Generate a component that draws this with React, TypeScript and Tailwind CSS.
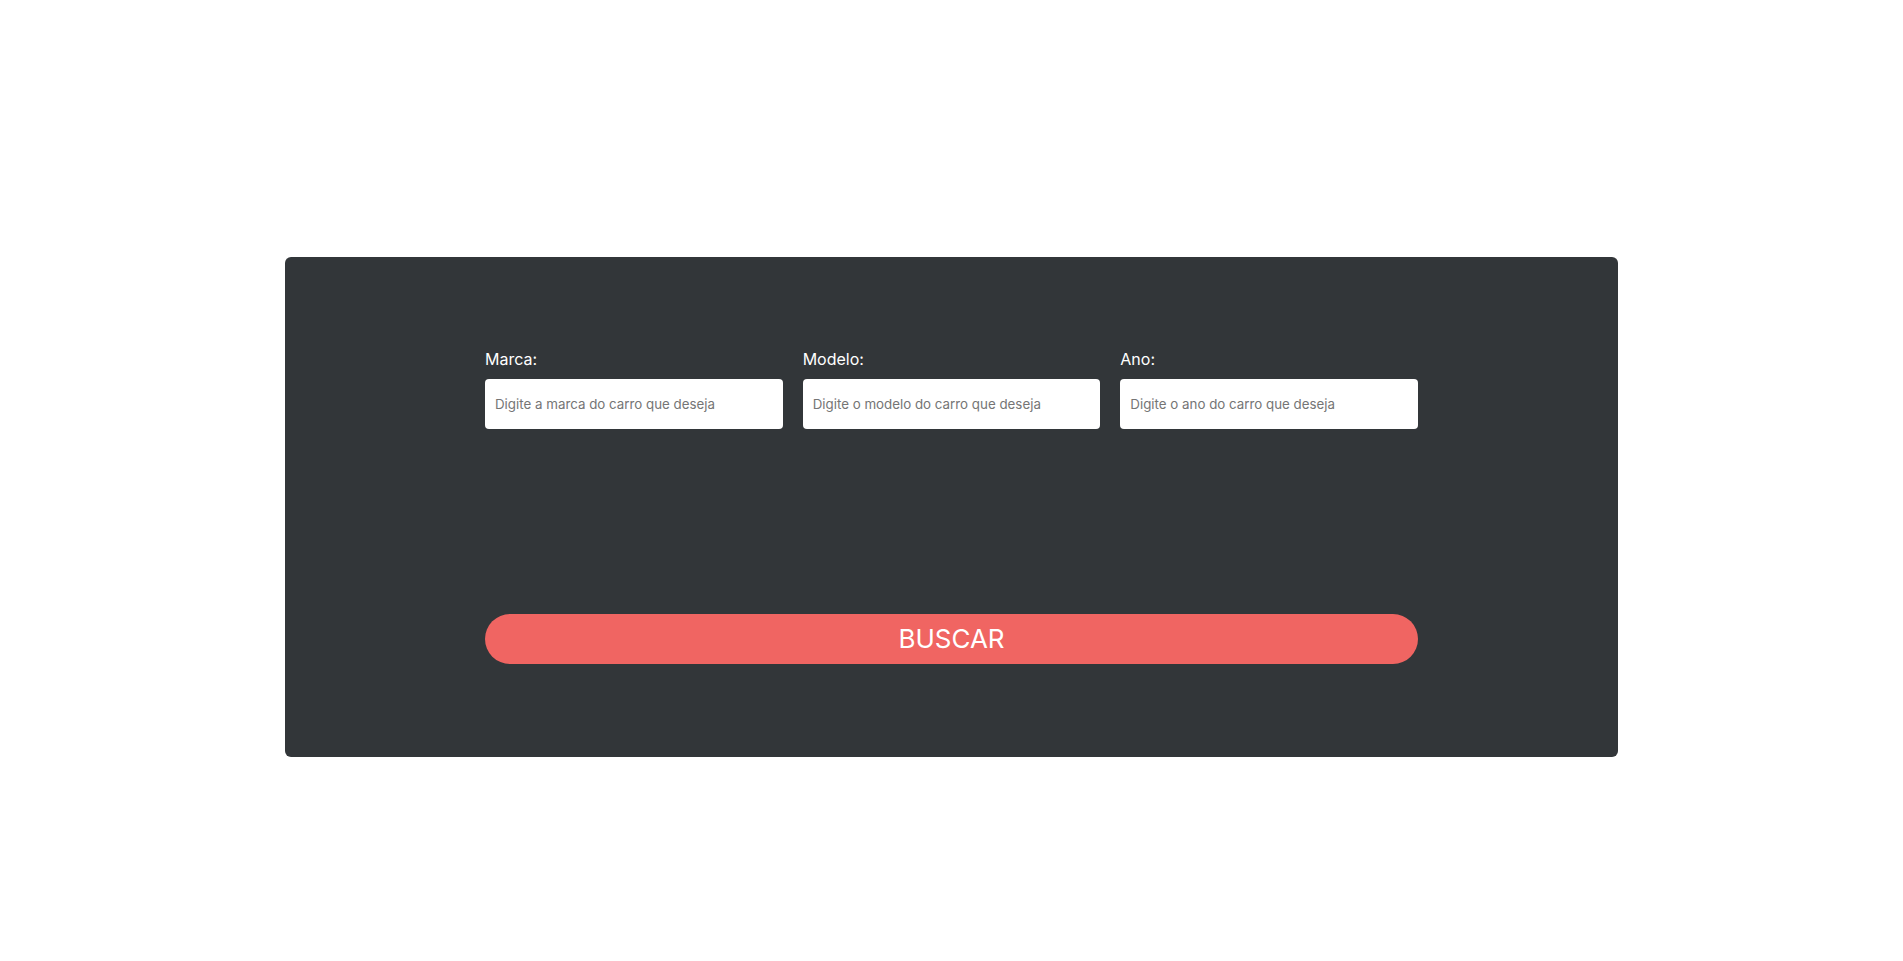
import React from 'react';

const fields = [
    { label: 'Marca:', placeholder: 'Digite a marca do carro que deseja' },
    { label: 'Modelo:', placeholder: 'Digite o modelo do carro que deseja' },
    { label: 'Ano:', placeholder: 'Digite o ano do carro que deseja' },
];

export default function App() {
    return (
        <div className="min-h-screen bg-white pt-[257px] font-['Inter',sans-serif]">
            <form
                className="mx-auto w-[1333px] rounded-md bg-[#323639] px-[200px] pt-[90px] pb-[93px]"
                onSubmit={(e) => e.preventDefault()}
            >
                <div className="grid grid-cols-3 gap-5">
                    {fields.map((field) => (
                        <label key={field.label} className="flex flex-col">
                            <span className="mb-2 text-base leading-6 text-white">{field.label}</span>
                            <input
                                type="text"
                                placeholder={field.placeholder}
                                className="h-[50px] w-full rounded bg-white px-2.5 text-[13.33px] text-gray-800 placeholder:text-[#757575] outline-none"
                            />
                        </label>
                    ))}
                </div>

                <button
                    type="submit"
                    className="mt-[185px] h-[50px] w-full rounded-full bg-[#f06562] text-[26px] leading-none text-white"
                >
                    BUSCAR
                </button>
            </form>
        </div>
    );
}
